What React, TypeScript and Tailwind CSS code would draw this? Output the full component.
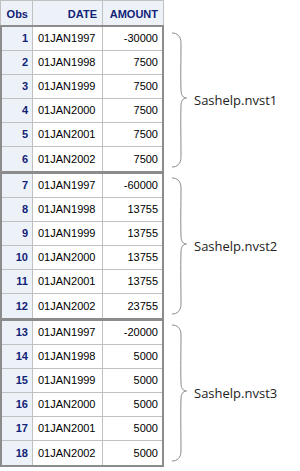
import React from "react";

type Row = [number, string, string];

const groups: { label: string; rows: Row[] }[] = [
  {
    label: "Sashelp.nvst1",
    rows: [
      [1, "01JAN1997", "-30000"],
      [2, "01JAN1998", "7500"],
      [3, "01JAN1999", "7500"],
      [4, "01JAN2000", "7500"],
      [5, "01JAN2001", "7500"],
      [6, "01JAN2002", "7500"],
    ],
  },
  {
    label: "Sashelp.nvst2",
    rows: [
      [7, "01JAN1997", "-60000"],
      [8, "01JAN1998", "13755"],
      [9, "01JAN1999", "13755"],
      [10, "01JAN2000", "13755"],
      [11, "01JAN2001", "13755"],
      [12, "01JAN2002", "23755"],
    ],
  },
  {
    label: "Sashelp.nvst3",
    rows: [
      [13, "01JAN1997", "-20000"],
      [14, "01JAN1998", "5000"],
      [15, "01JAN1999", "5000"],
      [16, "01JAN2000", "5000"],
      [17, "01JAN2001", "5000"],
      [18, "01JAN2002", "5000"],
    ],
  },
];

function Brace({ h }: { h: number }) {
  const a = 8;
  const b = h - 3;
  const m = Math.round((a + b) / 2) - 2;
  const d = `M1,${a} C6,${a} 10,${a + 3} 10,${a + 10} C10,${a + 30} 9.5,${m - 25} 10,${m - 8} C10,${m - 3} 12,${m} 15.5,${m} C12,${m} 10,${m + 3} 10,${m + 8} C9.5,${m + 25} 10,${b - 30} 10,${b - 10} C10,${b - 3} 6,${b} 1,${b}`;
  return (
    <svg width="17" height={h} viewBox={`0 0 17 ${h}`} className="shrink-0">
      <path d={d} fill="none" stroke="#8a8a8a" strokeWidth="1" />
    </svg>
  );
}

export default function App() {
  return (
    <div
      className="flex bg-white w-[300px] h-[471px]"
      style={{ fontFamily: '"Liberation Sans", Arial, sans-serif' }}
    >
      <div className="flex flex-col w-[164px] shrink-0">
        <div className="flex h-[25px] border-l border-r border-t border-[#c1c1c1] bg-[#edf2f9] text-[11px] font-bold text-[#112277]">
          <div className="w-[32px] border-r border-[#c1c1c1] flex items-center justify-end pr-[4px] pt-[3px]">
            Obs
          </div>
          <div className="w-[70px] border-r border-[#c1c1c1] flex items-center justify-end pr-[5px] pt-[3px]">
            DATE
          </div>
          <div className="w-[58px] flex items-center justify-end pr-[3px] pt-[3px]">
            AMOUNT
          </div>
        </div>
        <div className="border-x-2 border-b-2 border-[#8c8c8c]">
          {groups.map((g, gi) => (
            <div
              key={gi}
              className={gi === 0 ? "border-t-2 border-[#8c8c8c]" : "border-t-[3px] border-[#8c8c8c]"}
            >
              {g.rows.map((r) => (
                <div
                  key={r[0]}
                  className={`flex h-[24px] text-[11px] ${r[0] % 6 === 0 ? "" : "border-b border-[#c1c1c1]"}`}
                >
                  <div className="w-[31px] bg-[#edf2f9] border-r border-[#c1c1c1] flex items-center justify-end pr-[4px] font-bold text-[#112277]">
                    {r[0]}
                  </div>
                  <div className="w-[70px] border-r border-[#c1c1c1] flex items-center pl-[5px] text-black">
                    {r[1]}
                  </div>
                  <div className="flex-1 flex items-center justify-end pr-[4px] text-black">
                    {r[2]}
                  </div>
                </div>
              ))}
            </div>
          ))}
        </div>
      </div>
      <div className="flex flex-col pl-[7px]">
        <div className="h-[25px]" />
        {groups.map((g, gi) => {
          const h = gi === 0 ? 145 : 147;
          return (
            <div key={gi} className="flex items-center" style={{ height: h }}>
              <Brace h={h} />
              <span
                className="ml-[6px] pt-[4px] text-[13px] leading-[18px] text-[#222222] whitespace-nowrap"
                style={{ fontFamily: '"Open Sans", sans-serif' }}
              >
                {g.label}
              </span>
            </div>
          );
        })}
      </div>
    </div>
  );
}
